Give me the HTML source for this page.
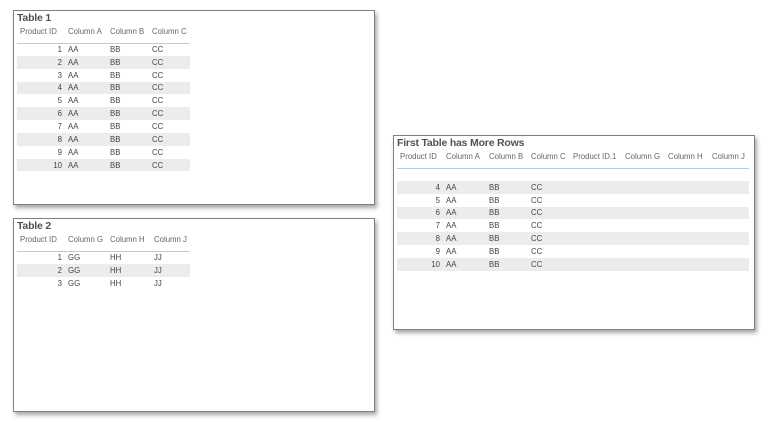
<!DOCTYPE html>
<html><head><style>
*{margin:0;padding:0;box-sizing:border-box}
body{width:768px;height:424px;background:#fff;position:relative;overflow:hidden;font-family:"Liberation Sans","DejaVu Sans",sans-serif;color:#444}
.box{position:absolute;border:1px solid #808080;background:#fff;box-shadow:2px 3px 4px rgba(0,0,0,.35)}
.title{position:absolute;left:3px;top:1px;font-size:10.5px;color:#333;font-weight:bold;letter-spacing:-.2px;opacity:.85}
table{position:absolute;border-collapse:collapse;font-size:7.8px;table-layout:fixed}
th{font-weight:normal;color:#666;height:22px;text-align:left;vertical-align:middle;padding:0 0 0 3px;border-bottom:1.5px solid #a9d2f2;white-space:nowrap}
td{height:12.85px;padding:0 0 0 3px;white-space:nowrap}
td.n{text-align:right;padding-right:3px}
tr.s td{background:#ececec}
</style></head><body>

<div class="box" style="left:13px;top:10px;width:362px;height:195px">
<div class="title">Table 1</div>
<table style="left:3px;top:10px;width:173px">
<colgroup><col style="width:48px"><col style="width:42px"><col style="width:42px"><col style="width:41px"></colgroup>
<tr><th>Product ID</th><th>Column A</th><th>Column B</th><th>Column C</th></tr>
<tr><td class="n">1</td><td>AA</td><td>BB</td><td>CC</td></tr>
<tr class="s"><td class="n">2</td><td>AA</td><td>BB</td><td>CC</td></tr>
<tr><td class="n">3</td><td>AA</td><td>BB</td><td>CC</td></tr>
<tr class="s"><td class="n">4</td><td>AA</td><td>BB</td><td>CC</td></tr>
<tr><td class="n">5</td><td>AA</td><td>BB</td><td>CC</td></tr>
<tr class="s"><td class="n">6</td><td>AA</td><td>BB</td><td>CC</td></tr>
<tr><td class="n">7</td><td>AA</td><td>BB</td><td>CC</td></tr>
<tr class="s"><td class="n">8</td><td>AA</td><td>BB</td><td>CC</td></tr>
<tr><td class="n">9</td><td>AA</td><td>BB</td><td>CC</td></tr>
<tr class="s"><td class="n">10</td><td>AA</td><td>BB</td><td>CC</td></tr>
</table>
</div>

<div class="box" style="left:13px;top:218px;width:362px;height:194px">
<div class="title">Table 2</div>
<table style="left:3px;top:10px;width:173px">
<colgroup><col style="width:48px"><col style="width:42px"><col style="width:44px"><col style="width:39px"></colgroup>
<tr><th>Product ID</th><th>Column G</th><th>Column H</th><th>Column J</th></tr>
<tr><td class="n">1</td><td>GG</td><td>HH</td><td>JJ</td></tr>
<tr class="s"><td class="n">2</td><td>GG</td><td>HH</td><td>JJ</td></tr>
<tr><td class="n">3</td><td>GG</td><td>HH</td><td>JJ</td></tr>
</table>
</div>

<div class="box" style="left:393px;top:135px;width:362px;height:195px">
<div class="title">First Table has More Rows</div>
<table style="left:3px;top:10px;width:352px">
<colgroup><col style="width:46px"><col style="width:43px"><col style="width:42px"><col style="width:42px"><col style="width:52px"><col style="width:43px"><col style="width:44px"><col style="width:40px"></colgroup>
<tr><th>Product ID</th><th>Column A</th><th>Column B</th><th>Column C</th><th>Product ID.1</th><th>Column G</th><th>Column H</th><th>Column J</th></tr>
<tr><td></td><td></td><td></td><td></td><td></td><td></td><td></td><td></td></tr>
<tr class="s"><td class="n">4</td><td>AA</td><td>BB</td><td>CC</td><td></td><td></td><td></td><td></td></tr>
<tr><td class="n">5</td><td>AA</td><td>BB</td><td>CC</td><td></td><td></td><td></td><td></td></tr>
<tr class="s"><td class="n">6</td><td>AA</td><td>BB</td><td>CC</td><td></td><td></td><td></td><td></td></tr>
<tr><td class="n">7</td><td>AA</td><td>BB</td><td>CC</td><td></td><td></td><td></td><td></td></tr>
<tr class="s"><td class="n">8</td><td>AA</td><td>BB</td><td>CC</td><td></td><td></td><td></td><td></td></tr>
<tr><td class="n">9</td><td>AA</td><td>BB</td><td>CC</td><td></td><td></td><td></td><td></td></tr>
<tr class="s"><td class="n">10</td><td>AA</td><td>BB</td><td>CC</td><td></td><td></td><td></td><td></td></tr>
</table>
</div>

</body></html>
